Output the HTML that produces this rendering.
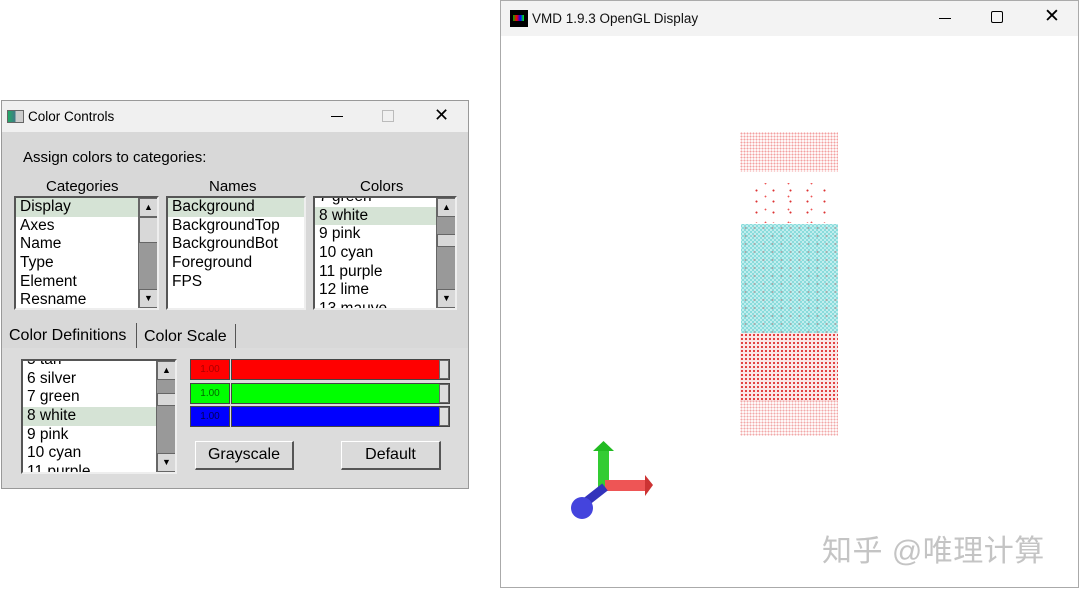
<!DOCTYPE html>
<html><head><meta charset="utf-8"><style>
*{margin:0;padding:0;box-sizing:border-box}
body{width:1080px;height:589px;background:#fff;position:relative;overflow:hidden;font-family:"Liberation Sans",sans-serif}
.a{position:absolute}
.win{left:1px;top:100px;width:468px;height:389px;background:#d8d8d8;border:1px solid #999}
.tb{left:0;top:0;width:466px;height:31px;background:#f0f0f0}
.t15{font-size:15px;color:#000;white-space:nowrap}
.list{background:#fff;border:2px solid #555;border-right-color:#eee;border-bottom-color:#eee;overflow:hidden}
.row{height:18.7px;line-height:18.7px;padding-left:4px;font-size:15.5px;white-space:nowrap}
.sel{background:#d5e3d5}
.sb{background:#999;border-left:1px solid #666}
.arr{position:absolute;left:0;width:19px;height:19px;background:#d8d8d8;border:1px solid #666;font-size:9px;text-align:center;line-height:17px}
.thumb{position:absolute;left:0;width:19px;background:#d8d8d8;border:1px solid #666}
.btn{background:#dadada;border:1px solid #fff;border-right:2px solid #555;border-bottom:2px solid #555;text-align:center;font-size:16px;line-height:26px}
.val{font-size:10px;text-align:center;line-height:19px;border:1px solid #444}
.dots{position:absolute}
</style></head><body>

<div class="a win">
 <div class="a tb">
  <div class="a" style="left:5px;top:9px;width:17px;height:13px;background:linear-gradient(90deg,#2a6 0,#478 50%,#ccc 50%);border:1px solid #666"></div>
  <div class="a" style="left:26px;top:8px;font-size:13.5px">Color Controls</div>
  <div class="a" style="left:329px;top:15px;width:12px;height:1px;background:#000"></div>
  <div class="a" style="left:380px;top:9px;width:12px;height:12px;border:1px solid #bbb"></div>
  <div class="a" style="left:432px;top:4px;font-size:18px">✕</div>
 </div>
 <div class="a t15" style="left:21px;top:48px">Assign colors to categories:</div>
 <div class="a t15" style="left:44px;top:77px">Categories</div>
 <div class="a t15" style="left:207px;top:77px">Names</div>
 <div class="a t15" style="left:358px;top:77px">Colors</div>

 <div class="a list" style="left:12px;top:95px;width:145px;height:114px">
  <div class="row sel">Display</div><div class="row">Axes</div><div class="row">Name</div><div class="row">Type</div><div class="row">Element</div><div class="row">Resname</div>
  <div class="a sb" style="left:122px;top:0;width:21px;height:110px"><div class="arr" style="top:0">▲</div><div class="thumb" style="top:19px;height:26px"></div><div class="arr" style="top:91px">▼</div></div>
 </div>
 <div class="a list" style="left:164px;top:95px;width:140px;height:114px">
  <div class="row sel">Background</div><div class="row">BackgroundTop</div><div class="row">BackgroundBot</div><div class="row">Foreground</div><div class="row">FPS</div>
 </div>
 <div class="a list" style="left:311px;top:95px;width:144px;height:114px">
  <div style="margin-top:-10px" class="row">7 green</div><div class="row sel">8 white</div><div class="row">9 pink</div><div class="row">10 cyan</div><div class="row">11 purple</div><div class="row">12 lime</div><div class="row">13 mauve</div>
  <div class="a sb" style="left:121px;top:0;width:21px;height:110px"><div class="arr" style="top:0">▲</div><div class="thumb" style="top:36px;height:13px"></div><div class="arr" style="top:91px">▼</div></div>
 </div>

 <div class="a" style="left:3px;top:222px;width:132px;height:26px;border-right:1px solid #555;font-size:16px;line-height:26px;padding-left:4px">Color Definitions</div>
 <div class="a" style="left:137px;top:223px;width:97px;height:25px;border-right:1px solid #555;font-size:16px;line-height:26px;padding-left:5px">Color Scale</div>
 <div class="a" style="left:0;top:247px;width:466px;height:140px;background:#dcdcdc"></div>

 <div class="a list" style="left:19px;top:258px;width:156px;height:115px">
  <div style="margin-top:-10px" class="row">5 tan</div><div class="row">6 silver</div><div class="row">7 green</div><div class="row sel">8 white</div><div class="row">9 pink</div><div class="row">10 cyan</div><div class="row">11 purple</div>
  <div class="a sb" style="left:133px;top:0;width:21px;height:111px"><div class="arr" style="top:0">▲</div><div class="thumb" style="top:32px;height:13px"></div><div class="arr" style="top:92px">▼</div></div>
 </div>

 <div class="a val" style="left:188px;top:258px;width:40px;height:21px;background:#f00;color:#a00">1.00</div>
 <div class="a" style="left:229px;top:258px;width:219px;height:21px;background:#f00;border:1px solid #444"></div>
 <div class="a" style="left:437px;top:259px;width:10px;height:19px;background:#ddd;border:1px solid #666"></div>
 <div class="a val" style="left:188px;top:282px;width:40px;height:21px;background:#0f0;color:#060">1.00</div>
 <div class="a" style="left:229px;top:282px;width:219px;height:21px;background:#0f0;border:1px solid #444"></div>
 <div class="a" style="left:437px;top:283px;width:10px;height:19px;background:#ddd;border:1px solid #666"></div>
 <div class="a val" style="left:188px;top:305px;width:40px;height:21px;background:#00f;color:#005">1.00</div>
 <div class="a" style="left:229px;top:305px;width:219px;height:21px;background:#00f;border:1px solid #444"></div>
 <div class="a" style="left:437px;top:306px;width:10px;height:19px;background:#ddd;border:1px solid #666"></div>

 <div class="a btn" style="left:193px;top:340px;width:99px;height:29px">Grayscale</div>
 <div class="a btn" style="left:339px;top:340px;width:100px;height:29px">Default</div>
</div>

<div class="a" style="left:500px;top:0;width:579px;height:588px;border:1px solid #aaa;background:#fff">
 <div class="a" style="left:0;top:0;width:577px;height:35px;background:#f3f3f3"></div>
 <div class="a" style="left:9px;top:9px;width:18px;height:17px;background:#000"><div class="a" style="left:3px;top:5px;width:11px;height:6px;background:linear-gradient(90deg,#0a0,#f00,#00f,#0f0)"></div></div>
 <div class="a" style="left:31px;top:10px;font-size:13.5px;color:#111">VMD 1.9.3 OpenGL Display</div>
 <div class="a" style="left:438px;top:17px;width:12px;height:1px;background:#000"></div>
 <div class="a" style="left:490px;top:10px;width:12px;height:12px;border:1.5px solid #000;border-radius:2px"></div>
 <div class="a" style="left:543px;top:4px;font-size:19px">✕</div>
</div>

<div class="dots" style="left:740px;top:132px;width:98px;height:40px;background:radial-gradient(circle,#f3a0a0 0.8px,transparent 1.2px) 0 0/3px 3px"></div>
<div class="dots" style="left:745px;top:183px;width:85px;height:40px;background:radial-gradient(circle,#d33 0.8px,transparent 1.2px) 3px 2px/17px 11px,radial-gradient(circle,#e55 0.7px,transparent 1.1px) 9px 7px/23px 13px"></div>
<div class="dots" style="left:741px;top:224px;width:97px;height:109px;background:radial-gradient(circle,#aaa 0.8px,transparent 1.3px) 0 0/9px 8px,radial-gradient(circle,transparent 1px,#55cccc 1.3px,transparent 2px) 0 0/4px 4px,#c8f0f0"></div>
<div class="dots" style="left:740px;top:333px;width:98px;height:68px;background:radial-gradient(circle,#d22 0.8px,transparent 1.2px) 0 0/4px 4px,#fbe6e6"></div>
<div class="dots" style="left:740px;top:400px;width:98px;height:36px;background:radial-gradient(circle,#f2a8a8 0.8px,transparent 1.2px) 0 0/3px 3px"></div>

<svg class="a" style="left:565px;top:435px" width="95" height="90">
 <rect x="33" y="16" width="11" height="40" fill="#3c3"/>
 <polygon points="28,16 49,16 38.5,6" fill="#2b2"/>
 <rect x="40" y="45" width="40" height="11" fill="#e55"/>
 <polygon points="80,40 88,50 80,61" fill="#c33"/>
 <line x1="40" y1="52" x2="17" y2="70" stroke="#33b" stroke-width="9"/>
 <circle cx="17" cy="73" r="11" fill="#44d"/>
</svg>

<div class="a" style="left:822px;top:526px;font-size:30px;letter-spacing:0.5px;color:#c4c4c4;font-family:'Liberation Sans','Noto Sans CJK SC',sans-serif;white-space:nowrap">知乎 @唯理计算</div>
</body></html>
